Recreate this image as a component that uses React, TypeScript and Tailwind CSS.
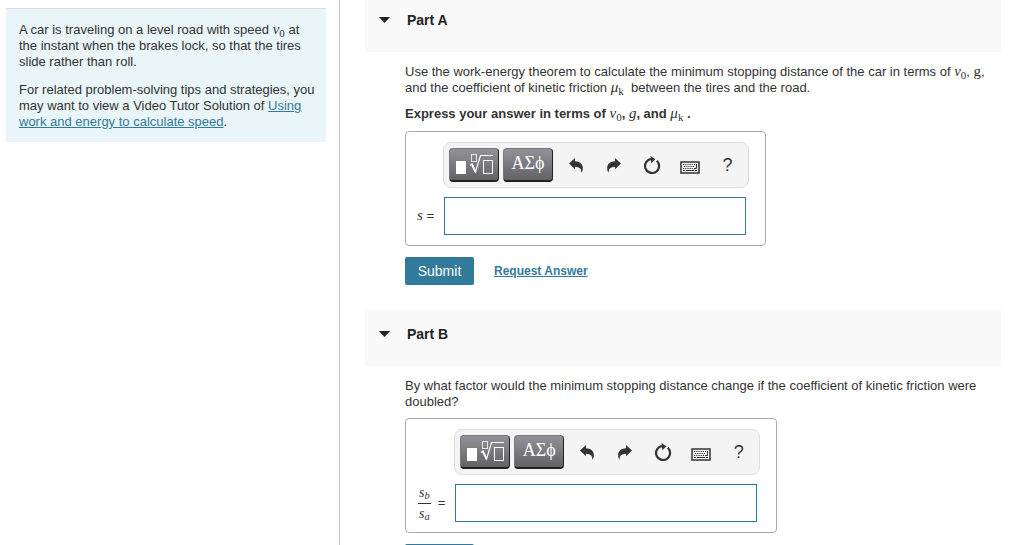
import React, { useState } from 'react';

interface AnswerBoxProps {
  id: string;
  label: React.ReactNode;
  ariaLabel: string;
}

interface PartProps {
  title: string;
  children: React.ReactNode;
}

const MATH = "font-['Liberation_Serif',serif] font-normal text-[15px] leading-[0]";

const Sym: React.FC<{ base: string; sub?: string }> = ({ base, sub }) => (
  <span className={MATH}>
    <i>{base}</i>
    {sub && <sub className="bottom-[-3px] text-[11px] leading-[0]">{sub}</sub>}
  </span>
);

const TemplateIcon = () => (
  <svg width="38" height="24" viewBox="0 0 38 24" fill="none" aria-hidden="true">
    <rect x="1" y="10" width="10" height="13" fill="#fff" />
    <rect x="16.5" y="3.5" width="5" height="7" stroke="#e6e6e9" />
    <path d="M15 14.5l2-1.5 3.5 8 5-16.5H38" stroke="#fff" strokeWidth="1.2" />
    <path d="M17 13.5l3.5 7.5" stroke="#fff" strokeWidth="1.8" />
    <rect x="28.5" y="9.5" width="9" height="13" stroke="#fff" />
  </svg>
);

const UndoIcon = () => (
  <svg width="14" height="15" viewBox="0 0 14 15" fill="#333" aria-hidden="true">
    <path d="M0 5.5L6 0v3.3c4.6.2 7.6 2.6 7.8 6.4.1 1.9-.3 3.6-1.5 5.1.2-4.2-1.7-5.8-6.3-6v2.5z" />
  </svg>
);

const RedoIcon = () => (
  <svg width="14" height="15" viewBox="0 0 14 15" fill="#333" aria-hidden="true">
    <path d="M14 5.5L8 0v3.3C3.4 3.5.4 5.9.2 9.7c-.1 1.9.3 3.6 1.5 5.1C1.5 10.6 3.4 9 8 8.8v2.5z" />
  </svg>
);

const ResetIcon = () => (
  <svg width="18" height="18" viewBox="0 0 18 18" fill="none" aria-hidden="true">
    <path d="M13.8 4.8A7 7 0 1 1 8.5 3" stroke="#333" strokeWidth="2.2" />
    <path d="M7.5 0l4.8 3.2-4 4z" fill="#333" />
  </svg>
);

const KeyboardIcon = () => (
  <svg width="20" height="13" viewBox="0 0 20 13" fill="none" aria-hidden="true">
    <rect x="1" y="1" width="18" height="11" stroke="#333" strokeWidth="1.5" />
    <path d="M3 3.5h12M4 5.5h11M3 7.5h10" stroke="#333" strokeDasharray="1.2 1" />
    <path d="M3 9.5h2M6 9.5h8M15 9.5h2M14 7.5h2.5v-4.5" stroke="#333" />
  </svg>
);

const tools = [
  { name: 'Undo', icon: <UndoIcon /> },
  { name: 'Redo', icon: <RedoIcon /> },
  { name: 'Reset', icon: <ResetIcon /> },
  { name: 'Keyboard shortcuts', icon: <span className="pt-1"><KeyboardIcon /></span> },
  { name: 'Help', icon: <span className="text-lg leading-none">?</span> },
];

const darkButton =
  'flex h-[34px] w-[50px] items-center justify-center rounded border border-[#77777c] border-r-[#222] border-b-2 border-b-[#222] bg-linear-to-b from-[#929298] to-[#626266] pb-[3px] text-white';

const AnswerBox: React.FC<AnswerBoxProps> = ({ id, label, ariaLabel }) => {
  const [value, setValue] = useState('');

  return (
    <div className="grid w-fit grid-cols-[auto_306px] gap-[9px] rounded border border-[#aaa] py-[10px] pr-4 pl-[11px]">
      <div className="col-start-2 flex h-[46px] items-center rounded-lg border border-[#ddd] bg-[#f4f4f4] pl-[5px]">
        <div className="flex gap-1">
          <button aria-label="Templates" className={darkButton}>
            <TemplateIcon />
          </button>
          <button aria-label="Symbols" className={`${darkButton} font-['Liberation_Serif','DejaVu_Serif',serif] text-lg leading-none`}>
            ΑΣϕ
          </button>
        </div>
        <div className="flex">
          {tools.map((t) => (
            <button key={t.name} aria-label={t.name} className="ml-px flex h-8 w-[37px] items-center justify-center first:ml-1 text-[#333]">
              {t.icon}
            </button>
          ))}
        </div>
      </div>
      <label htmlFor={id} className="flex items-center">{label}</label>
      <input
        id={id}
        aria-label={ariaLabel}
        value={value}
        onChange={(e) => setValue(e.target.value)}
        className="mr-[3px] ml-px h-[38px] border border-[#317a9b] bg-white px-2 outline-none"
      />
    </div>
  );
};

const Actions = () => (
  <div className="mt-[11px] flex items-center gap-5">
    <button className="h-7 w-[69px] rounded-xs bg-[#317a9b] text-sm text-white">Submit</button>
    <a href="#" className="text-xs font-bold text-[#317a9b] underline">Request Answer</a>
  </div>
);

const Part: React.FC<PartProps> = ({ title, children }) => {
  const [open, setOpen] = useState(true);

  return (
    <section className="mb-[25px]">
      <h2 className="h-14 bg-[#f9f9f9] pt-4 pl-[14px]">
        <button onClick={() => setOpen(!open)} className="flex items-center gap-[17px] text-sm leading-4 font-bold text-[#222]">
          <svg width="11" height="6" viewBox="0 0 11 6" fill="#222" aria-hidden="true">
            <path d="M0 0h11L5.5 6z" />
          </svg>
          {title}
        </button>
      </h2>
      {open && <div className="pt-3 pr-1 pl-10">{children}</div>}
    </section>
  );
};

export default function App() {
  return (
    <div className="flex h-screen overflow-hidden bg-white font-['Liberation_Sans',Arial,sans-serif] text-[13px] leading-4 text-[#333]">
      <aside className="w-[340px] shrink-0 border-r border-[#c3c7d3] py-2 pr-[13px] pl-[6px]">
        <div className="space-y-3 border-t border-[#ddd] bg-[#e9f5f8] pt-[13px] pr-2 pb-3 pl-[13px]">
          <p>
            A car is traveling on a level road with speed <Sym base="v" sub="0" /> at the instant when the brakes
            lock, so that the tires slide rather than roll.
          </p>
          <p>
            For related problem-solving tips and strategies, you may want to view a Video Tutor Solution of{' '}
            <a href="#" className="text-[#317a9b] underline">Using work and energy to calculate speed</a>.
          </p>
        </div>
      </aside>

      <main className="-mt-1 min-w-0 flex-1 pr-[23px] pl-[25px]">
        <Part title="Part A">
          <p>
            Use the work-energy theorem to calculate the minimum stopping distance of the car in terms of{' '}
            <Sym base="v" sub="0" />, <span className={MATH}>g</span>, and the coefficient of kinetic friction{' '}
            <Sym base="μ" sub="k" />&nbsp; between the tires and the road.
          </p>
          <p className="mt-[10px] mb-[9px] font-bold">
            Express your answer in terms of <Sym base="v" sub="0" />, <Sym base="g" />, and{' '}
            <Sym base="μ" sub="k" /> .
          </p>
          <AnswerBox id="answer-a" ariaLabel="s" label={<span><Sym base="s" /> =</span>} />
          <Actions />
        </Part>

        <Part title="Part B">
          <p className="mb-2">
            By what factor would the minimum stopping distance change if the coefficient of kinetic friction were doubled?
          </p>
          <AnswerBox
            id="answer-b"
            ariaLabel="s b over s a"
            label={
              <span className="flex items-center gap-[6px]">
                <span className="flex flex-col items-center px-px font-['Liberation_Serif',serif] text-sm leading-3 italic">
                  <span className="border-b border-[#333] px-px pb-1">s<sub>b</sub></span>
                  <span className="pt-1">s<sub>a</sub></span>
                </span>
                =
              </span>
            }
          />
          <Actions />
        </Part>
      </main>
    </div>
  );
}
